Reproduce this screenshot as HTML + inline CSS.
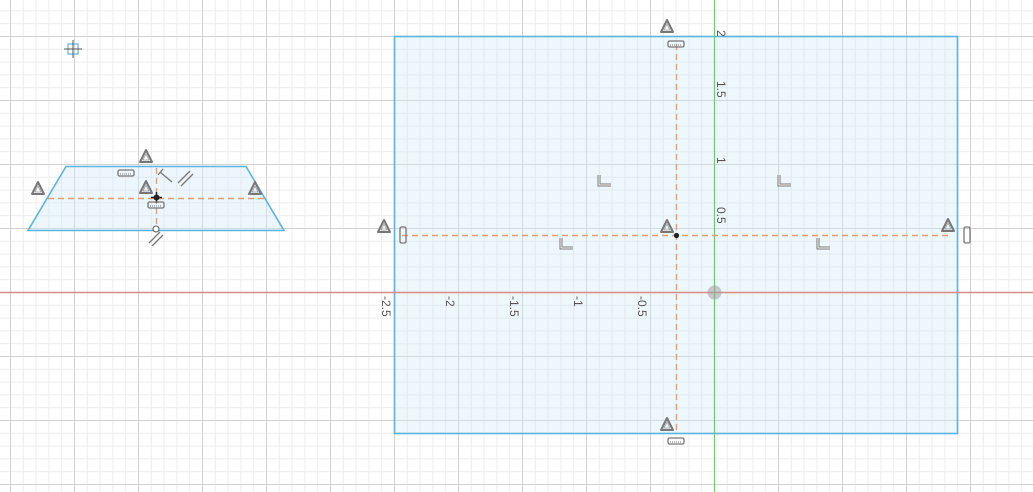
<!DOCTYPE html>
<html><head><meta charset="utf-8"><style>
html,body{margin:0;padding:0;background:#fff;width:1033px;height:492px;overflow:hidden}
svg{display:block}
text{font-family:"Liberation Sans",sans-serif;font-size:12px;fill:#555}
</style></head><body>
<svg width="1033" height="492" viewBox="0 0 1033 492">
<defs>
<pattern id="minor" patternUnits="userSpaceOnUse" x="10" y="36" width="12.8" height="12.8">
<path d="M0 0.5H12.8M0.5 0V12.8" stroke="#ececec" stroke-width="1" fill="none"/>
</pattern>
<pattern id="major" patternUnits="userSpaceOnUse" x="10" y="36" width="64" height="64">
<path d="M0 0.5H64M0.5 0V64" stroke="#d2d2d2" stroke-width="1" fill="none"/>
</pattern>
<g id="tri"><path d="M0 -1 L-6 11 H6 Z" fill="none" stroke="#777" stroke-width="2" stroke-linejoin="round"/><path d="M0 3 L-3 9 H3 Z" fill="none" stroke="#999" stroke-width="0.8"/></g>
<g id="hz"><rect x="-8" y="-3" width="16" height="6" rx="1.5" fill="none" stroke="#777" stroke-width="1.3"/><path d="M-6 1H6" stroke="#777" stroke-width="1" stroke-dasharray="1 1"/></g>
<g id="vt"><rect x="-3" y="-8" width="6" height="16" rx="1.5" fill="none" stroke="#777" stroke-width="1.3"/></g>
<g id="perp"><path d="M0 -10V0H12" fill="none" stroke="#777" stroke-width="3"/><path d="M0 -10V0H12" fill="none" stroke="#fff" stroke-width="1"/></g>
</defs>
<rect width="1033" height="492" fill="url(#minor)"/>
<rect width="1033" height="492" fill="url(#major)"/>
<rect x="394.5" y="36.5" width="563" height="397" fill="#cfe9f7" fill-opacity="0.35" stroke="#5ab4e0" stroke-width="1.6"/>
<path d="M66 166.5H246L284 230.5H28Z" fill="#cfe9f7" fill-opacity="0.4" stroke="#5ab4e0" stroke-width="1.6"/>
<line x1="0" y1="292.5" x2="1033" y2="292.5" stroke="#d98a8a" stroke-width="1.5"/>
<line x1="714.5" y1="0" x2="714.5" y2="492" stroke="#5fd45f" stroke-width="1.2"/>
<circle cx="714.5" cy="292.5" r="7" fill="#999" fill-opacity="0.5"/>
<g stroke="#e0a070" stroke-width="1.4" stroke-dasharray="6 4" fill="none">
<line x1="676.5" y1="44" x2="676.5" y2="434"/>
<line x1="402" y1="235.5" x2="950" y2="235.5"/>
<line x1="48" y1="198.5" x2="265" y2="198.5"/>
<line x1="156.5" y1="168" x2="156.5" y2="228"/>
</g>
<circle cx="676.5" cy="235.5" r="2.6" fill="#222"/>
<circle cx="156.5" cy="197.5" r="3" fill="#222"/>
<path d="M151 197.5H162M156.5 192V203" stroke="#222" stroke-width="1.5"/>
<circle cx="156" cy="229" r="3" fill="#fff" stroke="#555"/>
<g>
<text transform="translate(382,296) rotate(90)">-2.5</text>
<text transform="translate(446,296) rotate(90)">-2</text>
<text transform="translate(510,296) rotate(90)">-1.5</text>
<text transform="translate(574,296) rotate(90)">-1</text>
<text transform="translate(638,296) rotate(90)">-0.5</text>
<text transform="translate(717,30) rotate(90)">2</text>
<text transform="translate(717,81) rotate(90)">1.5</text>
<text transform="translate(717,157) rotate(90)">1</text>
<text transform="translate(717,207) rotate(90)">0.5</text>
</g>
<use href="#tri" x="667" y="21"/>
<use href="#hz" x="676" y="44"/>
<use href="#tri" x="667" y="221"/>
<use href="#tri" x="384" y="221"/>
<use href="#vt" x="403" y="235"/>
<use href="#tri" x="948" y="220"/>
<use href="#vt" x="967" y="235"/>
<use href="#tri" x="667" y="419"/>
<use href="#hz" x="676" y="441"/>
<use href="#perp" x="599" y="185"/>
<use href="#perp" x="779" y="185"/>
<use href="#perp" x="561" y="248"/>
<use href="#perp" x="818" y="248"/>
<use href="#tri" x="146" y="151"/>
<use href="#tri" x="38" y="183"/>
<use href="#tri" x="146" y="182"/>
<use href="#tri" x="255" y="183"/>
<use href="#hz" x="126" y="173"/>
<use href="#hz" x="156" y="205"/>
<g stroke="#777" stroke-width="1.3" fill="none">
<path d="M160 172L172 182M158 175L163 169"/>
<path d="M178 183L190 171M181 186L193 174"/>
<path d="M149 243L160 232M152 246L163 235"/>
</g>
<g stroke="#5ab4e0" stroke-width="1.2" fill="none"><rect x="68" y="44" width="10" height="10"/></g>
<path d="M73 40V58M64 49H82" stroke="#555" stroke-width="1"/>
</svg>
</body></html>
